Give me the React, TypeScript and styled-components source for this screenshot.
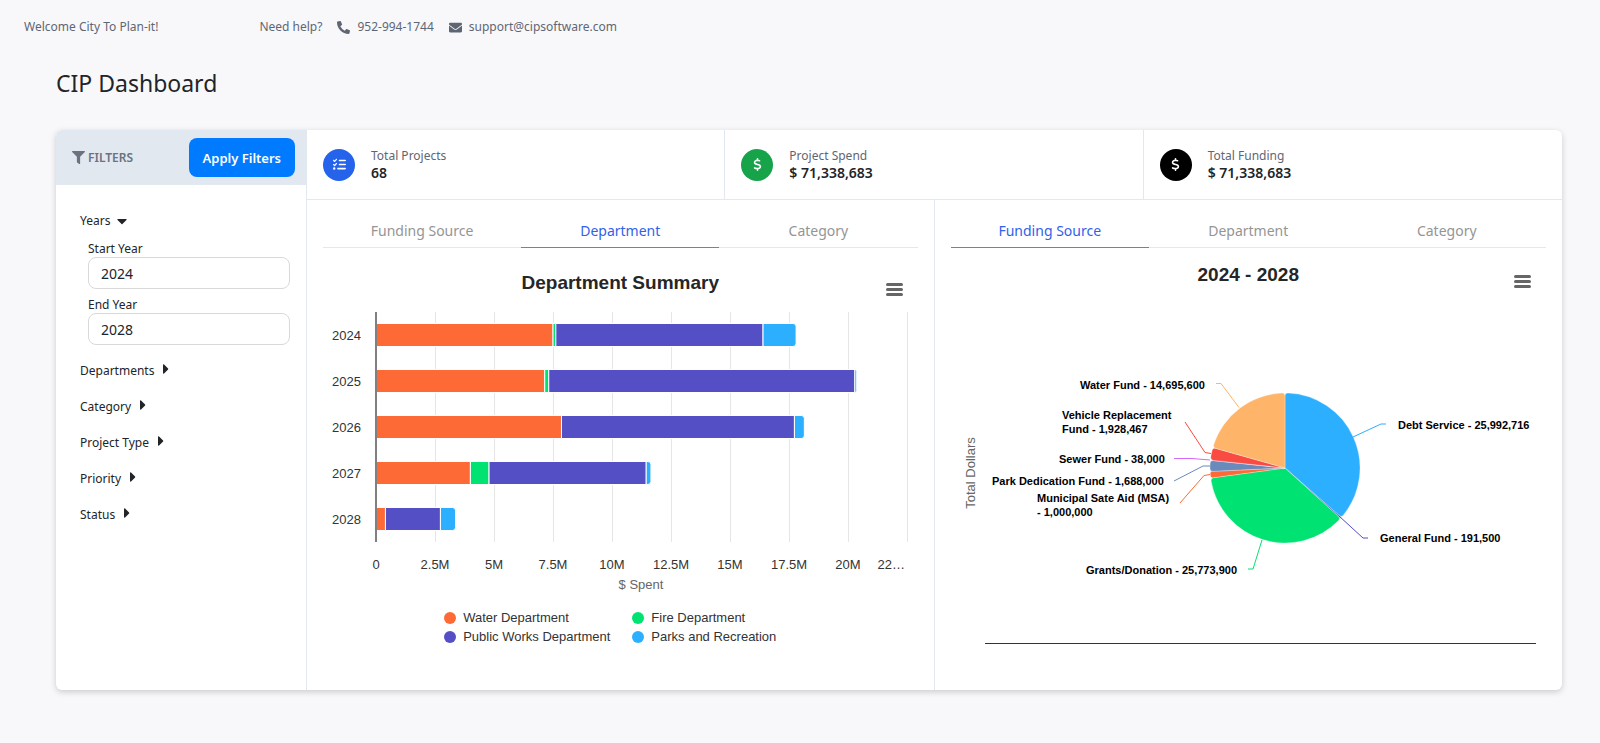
import React, { useState } from 'react';
import styled, { createGlobalStyle } from 'styled-components';
import { FaPhoneAlt, FaEnvelope, FaFilter, FaCaretDown, FaCaretRight } from 'react-icons/fa';
import { FaListCheck, FaDollarSign } from 'react-icons/fa6';

const line = '#e2e8f0';
const chartFont = '"Liberation Sans", Arial, Helvetica, sans-serif';

const GlobalStyle = createGlobalStyle`
  *, *::before, *::after { box-sizing: border-box; }
  body {
    margin: 0;
    background: #f8f8fb;
    color: #212529;
    font-family: "Noto Sans", "Segoe UI", sans-serif;
    font-size: 12px;
    line-height: 20px;
  }
  button, input { font: inherit; color: inherit; }
`;

const TopBar = styled.header`
  display: flex;
  align-items: center;
  gap: 101px;
  padding: 16px 24px;
  color: #5f6673;
  line-height: 22px;
`;

const Help = styled.div`
  display: flex;
  align-items: center;
  gap: 15px;
`;

const ContactLink = styled.a`
  display: flex;
  align-items: center;
  gap: 7px;
  color: inherit;
  text-decoration: none;
`;

const Page = styled.main`
  padding: 11px 38px 53px 56px;
`;

const PageTitle = styled.h1`
  margin: 0 0 29px;
  font-size: 23px;
  line-height: 36px;
  font-weight: 400;
`;

const Card = styled.div`
  display: grid;
  grid-template-columns: 251px minmax(0, 1fr);
  background: #fff;
  border-radius: 6px;
  overflow: hidden;
  box-shadow: 0 2px 6px rgba(0, 0, 0, 0.18);
`;

const Sidebar = styled.aside`
  border-right: 1px solid ${line};
`;

const SidebarHeader = styled.div`
  display: flex;
  align-items: center;
  justify-content: space-between;
  padding: 8px 11px 8px 16px;
  background: ${line};
`;

const FiltersLabel = styled.h2`
  display: flex;
  align-items: center;
  gap: 3px;
  margin: 0;
  color: #6b7280;
  font-size: 12px;
  line-height: 16px;
  font-weight: 600;
`;

const ApplyButton = styled.button`
  height: 39px;
  padding: 0 14px;
  border: 0;
  border-radius: 8px;
  background: #007bff;
  color: #fff;
  font-size: 13px;
  font-weight: 600;
  cursor: pointer;
`;

const FilterList = styled.div`
  display: flex;
  flex-direction: column;
  align-items: stretch;
  gap: 16px;
  padding: 26px 16px 26px 24px;
`;

const FilterToggle = styled.button<{ $open?: boolean }>`
  display: flex;
  align-items: ${(p) => (p.$open ? 'center' : 'flex-start')};
  gap: 4px;
  padding: 0;
  border: 0;
  background: none;
  cursor: pointer;
`;

const YearFields = styled.div`
  display: flex;
  flex-direction: column;
  gap: 8px;
  padding: 10px 0 0 8px;
`;

const Field = styled.label`
  display: block;
  line-height: 16px;
`;

const YearInput = styled.input`
  display: block;
  width: 100%;
  height: 32px;
  padding: 0 12px;
  border: 1px solid #d9d9d9;
  border-radius: 8px;
  background: #fff;
  font-size: 14px;
`;

const Stats = styled.div`
  display: grid;
  grid-template-columns: repeat(3, minmax(0, 1fr));
  border-bottom: 1px solid ${line};
`;

const Stat = styled.div`
  display: flex;
  align-items: center;
  gap: 16px;
  height: 69px;
  padding: 0 16px;
  &:not(:last-child) { border-right: 1px solid ${line}; }
`;

const StatIcon = styled.span<{ $color: string }>`
  display: grid;
  place-items: center;
  width: 32px;
  height: 32px;
  border-radius: 50%;
  background: ${(p) => p.$color};
  color: #fff;
`;

const StatLabel = styled.div`
  color: #5f6673;
  line-height: 17px;
`;

const StatValue = styled.div`
  font-size: 14px;
  line-height: 18px;
  font-weight: 600;
`;

const Panels = styled.div`
  display: grid;
  grid-template-columns: repeat(2, minmax(0, 1fr));
`;

const Panel = styled.section`
  padding: 16px 16px 45px;
  &:not(:last-child) { border-right: 1px solid ${line}; }
`;

const Tabs = styled.div`
  display: grid;
  grid-template-columns: repeat(3, minmax(0, 1fr));
`;

const Tab = styled.button<{ $active: boolean }>`
  height: 32px;
  padding: 0 0 1px;
  border: 0;
  border-bottom: 1px solid ${(p) => (p.$active ? '#4b86f7' : line)};
  background: none;
  color: ${(p) => (p.$active ? '#2f62ec' : '#959595')};
  font-size: 14px;
  cursor: pointer;
`;

const ChartHeader = styled.div<{ $top: number }>`
  display: grid;
  grid-template-columns: 1fr auto 1fr;
  align-items: start;
  padding: ${(p) => p.$top}px 15px 0;
`;

const ChartTitle = styled.h3`
  grid-column: 2;
  margin: 0;
  font-family: ${chartFont};
  font-size: 19px;
  line-height: 26px;
  font-weight: 700;
  color: #262626;
`;

const MenuButton = styled.button`
  justify-self: end;
  display: flex;
  padding: 12px 0 0;
  border: 0;
  background: none;
  cursor: pointer;
`;

const Plot = styled.svg<{ $height: number }>`
  display: block;
  width: 100%;
  height: ${(p) => p.$height}px;
  font-family: ${chartFont};
  font-size: 13px;
`;

const Legend = styled.ul`
  display: grid;
  grid-template-columns: repeat(2, max-content);
  justify-content: center;
  gap: 3px 22px;
  margin: 0;
  padding: 15px 20px 0 0;
  list-style: none;
  font-family: ${chartFont};
  font-size: 13px;
  line-height: 16px;
  color: #333;
`;

const LegendItem = styled.li`
  display: flex;
  align-items: center;
  gap: 7px;
`;

const Dot = styled.span<{ $color: string }>`
  width: 12px;
  height: 12px;
  border-radius: 50%;
  background: ${(p) => p.$color};
`;

const departments = [
  { name: 'Water Department', color: '#fe6a35' },
  { name: 'Fire Department', color: '#00e272' },
  { name: 'Public Works Department', color: '#544fc5' },
  { name: 'Parks and Recreation', color: '#2caffe' },
];

/* Spend in millions, in the order of the departments. */
const spend = [
  { year: '2024', values: [7.5, 0.12, 8.78, 1.4] },
  { year: '2025', values: [7.15, 0.17, 12.97, 0.08] },
  { year: '2026', values: [7.86, 0, 9.87, 0.42] },
  { year: '2027', values: [4.0, 0.79, 6.66, 0.2] },
  { year: '2028', values: [0.4, 0, 2.33, 0.64] },
];

const ticks = ['0', '2.5M', '5M', '7.5M', '10M', '12.5M', '15M', '17.5M', '20M'];

function DepartmentChart() {
  const left = 53;
  const top = 15;
  const band = 46;
  const step = 59;
  const perMillion = step / 2.5;
  return (
    <Plot $height={298} viewBox="0 0 590 298" preserveAspectRatio="xMinYMin meet" role="img" aria-label="Department Summary">
      {[...ticks, 'end'].slice(1).map((t, i) => (
        <path key={t} d={`M${left + (i + 1) * step + 0.5} ${top}v${band * 5}`} stroke="#e6e6e6" />
      ))}
      {spend.map((row, r) => {
        let x = left;
        return (
          <g key={row.year}>
            {row.values.map((v, i) => {
              const w = v * perMillion;
              const x0 = x;
              x += w;
              if (!v) return null;
              const y = top + r * band + 11.5;
              const c = i === 3 ? Math.min(3, w) : 0;
              return (
                <path
                  key={i}
                  d={`M${x0} ${y}h${w - c}q${c} 0 ${c} ${c}v${23 - 2 * c}q0 ${c} ${-c} ${c}h${c - w}z`}
                  fill={departments[i].color}
                  stroke="#fff"
                />
              );
            })}
            <text x={left - 15} y={top + r * band + 28} textAnchor="end" fill="#333">{row.year}</text>
          </g>
        );
      })}
      <path d={`M${left} ${top}v${band * 5}`} stroke="#808080" strokeWidth="2" />
      {ticks.map((t, i) => (
        <text key={t} x={left + i * step} y="272" textAnchor="middle" fill="#333">{t}</text>
      ))}
      <text x="582" y="272" textAnchor="end" fill="#333">22…</text>
      <text x={left + 265} y="292" textAnchor="middle" fill="#666">$ Spent</text>
    </Plot>
  );
}

type Slice = {
  value: number;
  color: string;
  leader: string;
  x: number;
  y: number;
  lines: string[];
};

const funds: Slice[] = [
  { value: 25992716, color: '#2caffe', leader: 'M436 138h-5L403 151', x: 448, y: 143, lines: ['Debt Service - 25,992,716'] },
  { value: 191500, color: '#544fc5', leader: 'M418 252h-5L389 230', x: 430, y: 256, lines: ['General Fund - 191,500'] },
  { value: 25773900, color: '#00e272', leader: 'M298 283h5L312 254', x: 136, y: 288, lines: ['Grants/Donation - 25,773,900'] },
  { value: 1000000, color: '#fe6a35', leader: 'M230 217L254 189.500L260 188.500', x: 87, y: 216, lines: ['Municipal Sate Aid (MSA)', '- 1,000,000'] },
  { value: 1688000, color: '#6b8abc', leader: 'M224 195L253 180H260', x: 42, y: 199, lines: ['Park Dedication Fund - 1,688,000'] },
  { value: 38000, color: '#d568fb', leader: 'M224 172.500H242L260 174', x: 109, y: 177, lines: ['Sewer Fund - 38,000'] },
  { value: 1928467, color: '#fa4b42', leader: 'M235 136L255 166.500L261 167.500', x: 112, y: 133, lines: ['Vehicle Replacement', 'Fund - 1,928,467'] },
  { value: 14695600, color: '#feb56a', leader: 'M266 97.500h5L289 121.500', x: 130, y: 103, lines: ['Water Fund - 14,695,600'] },
];

const fundTotal = funds.reduce((sum, f) => sum + f.value, 0);

/* Pie wedge with softened outer corners. */
function wedge(cx: number, cy: number, r: number, a0: number, a1: number) {
  const at = (a: number, d: number) => `${(cx + d * Math.sin(a)).toFixed(2)} ${(cy - d * Math.cos(a)).toFixed(2)}`;
  const c = Math.min(3, ((a1 - a0) * r) / 3);
  const da = c / r;
  const large = a1 - a0 > Math.PI ? 1 : 0;
  return `M${cx} ${cy}L${at(a0, r - c)}Q${at(a0, r)} ${at(a0 + da, r)}A${r} ${r} 0 ${large} 1 ${at(a1 - da, r)}Q${at(a1, r)} ${at(a1, r - c)}Z`;
}

function FundingChart() {
  const cx = 335;
  const cy = 182;
  let angle = 0;
  return (
    <Plot $height={356} viewBox="1 3 590 356" preserveAspectRatio="xMinYMin meet" role="img" aria-label="Funding by source, 2024 - 2028">
      {funds.map((f) => {
        const start = angle;
        angle += (f.value / fundTotal) * Math.PI * 2;
        return (
          <path key={f.color} d={wedge(cx, cy, 75, start, angle)} fill={f.color} stroke="#fff" strokeWidth="0.3" />
        );
      })}
      {funds.map((f) => (
        <g key={f.color}>
          <path d={f.leader} fill="none" stroke={f.color} />
          <text fontSize="11" fontWeight="700" fill="#000">
            {f.lines.map((t, i) => (
              <tspan key={t} x={f.x} y={f.y + i * 14}>{t}</tspan>
            ))}
          </text>
        </g>
      ))}
      <text transform="translate(25 187) rotate(-90)" textAnchor="middle" fill="#666">Total Dollars</text>
      <path d="M35 357.500H586" stroke="#333" />
    </Plot>
  );
}

function ChartMenu() {
  return (
    <MenuButton type="button" aria-label="Chart menu">
      <svg width="17" height="15" viewBox="0 0 17 15" aria-hidden="true">
        <path d="M1.500 2.500h14M1.500 7.500h14M1.500 12.500h14" stroke="#666" strokeWidth="3" strokeLinecap="round" />
      </svg>
    </MenuButton>
  );
}

const tabNames = ['Funding Source', 'Department', 'Category'];

function TabStrip({ initial }: { initial: string }) {
  const [active, setActive] = useState(initial);
  return (
    <Tabs role="tablist">
      {tabNames.map((name) => (
        <Tab key={name} type="button" role="tab" aria-selected={name === active} $active={name === active} onClick={() => setActive(name)}>
          {name}
        </Tab>
      ))}
    </Tabs>
  );
}

const stats = [
  { label: 'Total Projects', value: '68', color: '#2563eb', icon: <FaListCheck size={13} /> },
  { label: 'Project Spend', value: '$ 71,338,683', color: '#16a34a', icon: <FaDollarSign size={13} /> },
  { label: 'Total Funding', value: '$ 71,338,683', color: '#000', icon: <FaDollarSign size={13} /> },
];

export default function App() {
  return (
    <>
      <GlobalStyle />
      <TopBar>
        <span>Welcome City To Plan-it!</span>
        <Help>
          <span>Need help?</span>
          <ContactLink href="tel:952-994-1744"><FaPhoneAlt size={13} />952-994-1744</ContactLink>
          <ContactLink href="mailto:support@cipsoftware.com"><FaEnvelope size={13} />support@cipsoftware.com</ContactLink>
        </Help>
      </TopBar>
      <Page>
        <PageTitle>CIP Dashboard</PageTitle>
        <Card>
          <Sidebar>
            <SidebarHeader>
              <FiltersLabel><FaFilter size={13} />FILTERS</FiltersLabel>
              <ApplyButton type="button">Apply Filters</ApplyButton>
            </SidebarHeader>
            <FilterList>
              <div>
                <FilterToggle type="button" aria-expanded="true" $open>Years <FaCaretDown size={16} /></FilterToggle>
                <YearFields>
                  <Field>Start Year<YearInput type="text" defaultValue="2024" /></Field>
                  <Field>End Year<YearInput type="text" defaultValue="2028" /></Field>
                </YearFields>
              </div>
              {['Departments', 'Category', 'Project Type', 'Priority', 'Status'].map((name) => (
                <FilterToggle key={name} type="button" aria-expanded="false">{name} <FaCaretRight size={16} /></FilterToggle>
              ))}
            </FilterList>
          </Sidebar>
          <div>
            <Stats>
              {stats.map((s) => (
                <Stat key={s.label}>
                  <StatIcon $color={s.color}>{s.icon}</StatIcon>
                  <div>
                    <StatLabel>{s.label}</StatLabel>
                    <StatValue>{s.value}</StatValue>
                  </div>
                </Stat>
              ))}
            </Stats>
            <Panels>
              <Panel>
                <TabStrip initial="Department" />
                <ChartHeader $top={22}>
                  <ChartTitle>Department Summary</ChartTitle>
                  <ChartMenu />
                </ChartHeader>
                <DepartmentChart />
                <Legend>
                  {departments.map((d) => (
                    <LegendItem key={d.name}><Dot $color={d.color} />{d.name}</LegendItem>
                  ))}
                </Legend>
              </Panel>
              <Panel>
                <TabStrip initial="Funding Source" />
                <ChartHeader $top={14}>
                  <ChartTitle>2024 - 2028</ChartTitle>
                  <ChartMenu />
                </ChartHeader>
                <FundingChart />
              </Panel>
            </Panels>
          </div>
        </Card>
      </Page>
    </>
  );
}
